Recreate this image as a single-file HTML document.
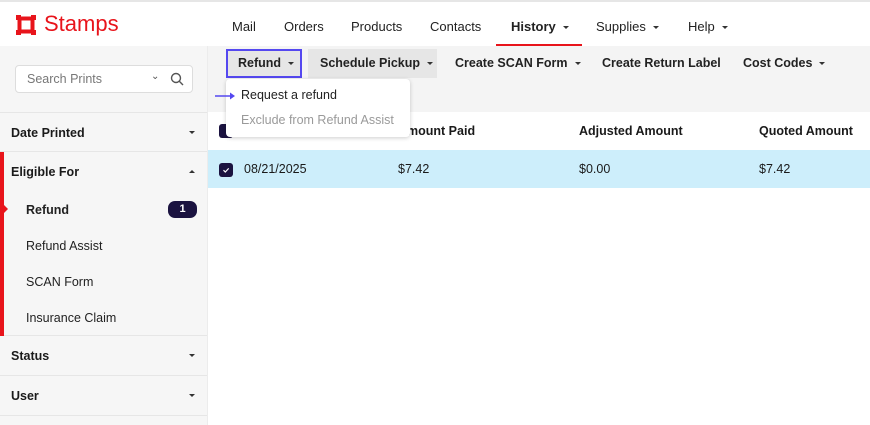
<!DOCTYPE html>
<html><head><style>
*{box-sizing:border-box;margin:0;padding:0}
body{width:870px;height:425px;overflow:hidden;background:#fff;font-family:"Liberation Sans",sans-serif;color:#1a1a1a;position:relative}
.abs{position:absolute}
.nav{top:0;left:0;width:870px;height:46px;background:#fff;border-top:2px solid #e6e6e6}
.nav span{position:absolute;top:17px;font-size:13px;color:#222}
.car{display:inline-block;width:0;height:0;border-left:3px solid transparent;border-right:3px solid transparent;border-top:3px solid #333;vertical-align:middle;margin-left:7px}
.side{top:46px;left:0;width:208px;height:379px;background:#f6f6f6;border-right:1px solid #ececec}
.tool{top:46px;left:208px;width:662px;height:66px;background:#f4f4f4}
.sec{position:absolute;left:0;width:207px;border-bottom:1px solid #e6e6e6;font-size:12.5px;font-weight:bold}
.sec .t{position:absolute;left:11px}
.sec .c{position:absolute;right:12px}
.item{position:absolute;left:26px;font-size:12.5px;color:#222}
.tb{position:absolute;top:10px;font-size:12.5px;font-weight:bold;color:#222}
.th{position:absolute;top:124px;font-size:12.5px;font-weight:bold}
.td{position:absolute;top:162px;font-size:12.5px}
.cb{position:absolute;width:14px;height:14px;background:#1b1340;border-radius:3px}
</style></head><body>
<div class="abs nav">
 <svg class="abs" style="left:16px;top:13px" width="20" height="20" viewBox="0 0 20 20"><path d="M3.5 3.5h13v13h-13z" fill="none" stroke="#e8141b" stroke-width="4"/><path d="M0 0h5v5H0zM15 0h5v5h-5zM0 15h5v5H0zM15 15h5v5h-5z" fill="#e8141b"/></svg>
 <div class="abs" style="left:44px;top:9px;font-size:22px;color:#e8141b">Stamps</div>
 <span style="left:232px">Mail</span>
 <span style="left:284px">Orders</span>
 <span style="left:351px">Products</span>
 <span style="left:430px">Contacts</span>
 <span style="left:511px;font-weight:bold">History<i class="car"></i></span>
 <div class="abs" style="left:496px;top:42px;width:86px;height:3px;background:#e8141b"></div>
 <span style="left:596px">Supplies<i class="car"></i></span>
 <span style="left:688px">Help<i class="car"></i></span>
</div>
<div class="abs side">
 <div class="abs" style="left:15px;top:19px;width:178px;height:28px;background:#fff;border:1px solid #ddd;border-radius:4px;font-size:12.5px;color:#777;padding:6px 11px">Search Prints
  <span class="abs" style="left:135px;top:5px;font-size:10px;color:#555">⌄</span>
  <svg class="abs" style="left:154px;top:6px" width="14" height="14" viewBox="0 0 14 14"><circle cx="6" cy="6" r="4.5" fill="none" stroke="#555" stroke-width="1.4"/><path d="M9.3 9.3L13 13" stroke="#555" stroke-width="1.4"/></svg>
 </div>
 <div class="sec" style="top:66px;height:40px;border-top:1px solid #e6e6e6"><span class="t" style="top:13px">Date Printed</span><span class="c" style="top:12px"><i class="car"></i></span></div>
 <div class="sec" style="top:106px;height:184px"><span class="t" style="top:13px">Eligible For</span><span class="c" style="top:12px"><i class="car" style="border-top:0;border-bottom:3px solid #333"></i></span></div>
 <div class="abs" style="left:0;top:106px;width:4px;height:184px;background:#e8141b"></div>
 <div class="abs" style="left:4px;top:159px;width:0;height:0;border-top:4px solid transparent;border-bottom:4px solid transparent;border-left:4px solid #e8141b"></div>
 <div class="item" style="top:157px;font-weight:bold">Refund</div>
 <div class="abs" style="left:168px;top:155px;width:29px;height:17px;background:#1b1340;border-radius:7px;color:#fff;font-size:11px;font-weight:bold;text-align:center;line-height:17px">1</div>
 <div class="item" style="top:193px">Refund Assist</div>
 <div class="item" style="top:229px">SCAN Form</div>
 <div class="item" style="top:265px">Insurance Claim</div>
 <div class="sec" style="top:290px;height:40px"><span class="t" style="top:13px">Status</span><span class="c" style="top:12px"><i class="car"></i></span></div>
 <div class="sec" style="top:330px;height:40px"><span class="t" style="top:13px">User</span><span class="c" style="top:12px"><i class="car"></i></span></div>
</div>
<div class="abs tool">
 <div class="abs" style="left:18px;top:3px;width:76px;height:29px;background:#e6e6e6;border:2px solid #5548f0"></div>
 <div class="tb" style="left:30px">Refund<i class="car"></i></div>
 <div class="abs" style="left:100px;top:3px;width:129px;height:29px;background:#e6e6e6"></div>
 <div class="tb" style="left:112px">Schedule Pickup<i class="car"></i></div>
 <div class="tb" style="left:247px">Create SCAN Form<i class="car"></i></div>
 <div class="tb" style="left:394px">Create Return Label</div>
 <div class="tb" style="left:535px">Cost Codes<i class="car"></i></div>
</div>
<div class="cb" style="left:219px;top:124px"></div>
<div class="th" style="left:398px">Amount Paid</div>
<div class="th" style="left:579px">Adjusted Amount</div>
<div class="th" style="left:759px">Quoted Amount</div>
<div class="abs" style="left:208px;top:150px;width:662px;height:38px;background:#cdeefb"></div>
<div class="cb" style="left:219px;top:163px"><svg width="14" height="14" viewBox="0 0 14 14"><path d="M4.5 7.2l1.8 1.8 3.4-3.6" fill="none" stroke="#fff" stroke-width="1.2"/></svg></div>
<div class="td" style="left:244px">08/21/2025</div>
<div class="td" style="left:398px">$7.42</div>
<div class="td" style="left:579px">$0.00</div>
<div class="td" style="left:759px">$7.42</div>
<div class="abs" style="left:226px;top:79px;width:184px;height:58px;background:#fff;border-radius:4px;box-shadow:0 1px 4px rgba(0,0,0,.2)"></div>
<svg class="abs" style="left:215px;top:91px" width="22" height="10" viewBox="0 0 22 10"><path d="M0 5h17" stroke="#5548f0" stroke-width="1.5"/><path d="M15 1.5l5 3.5-5 3.5z" fill="#5548f0"/></svg>
<div class="abs" style="left:241px;top:88px;font-size:12.5px;color:#222">Request a refund</div>
<div class="abs" style="left:241px;top:113px;font-size:12.5px;color:#9a9a9a">Exclude from Refund Assist</div>
</body></html>
